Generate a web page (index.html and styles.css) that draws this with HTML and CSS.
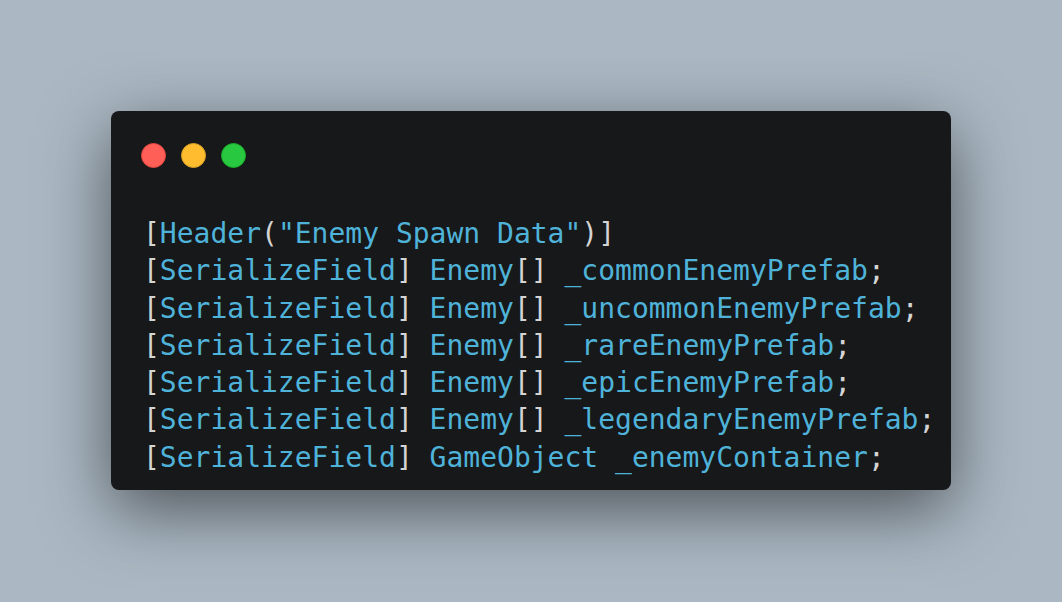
FILE: index.html
```html
<!DOCTYPE html>
<html>
<head>
<meta charset="utf-8">
<link rel="stylesheet" href="styles.css">
</head>
<body>
<div class="stage">
  <div class="window">
    <div class="controls">
      <span class="dot red"></span>
      <span class="dot yellow"></span>
      <span class="dot green"></span>
    </div>
    <pre class="code"><span class="p">[</span><span class="k">Header</span><span class="p">(</span><span class="k">"Enemy Spawn Data"</span><span class="p">)]</span>
<span class="p">[</span><span class="k">SerializeField</span><span class="p">]</span> <span class="k">Enemy</span><span class="p">[]</span> <span class="k">_commonEnemyPrefab</span><span class="p">;</span>
<span class="p">[</span><span class="k">SerializeField</span><span class="p">]</span> <span class="k">Enemy</span><span class="p">[]</span> <span class="k">_uncommonEnemyPrefab</span><span class="p">;</span>
<span class="p">[</span><span class="k">SerializeField</span><span class="p">]</span> <span class="k">Enemy</span><span class="p">[]</span> <span class="k">_rareEnemyPrefab</span><span class="p">;</span>
<span class="p">[</span><span class="k">SerializeField</span><span class="p">]</span> <span class="k">Enemy</span><span class="p">[]</span> <span class="k">_epicEnemyPrefab</span><span class="p">;</span>
<span class="p">[</span><span class="k">SerializeField</span><span class="p">]</span> <span class="k">Enemy</span><span class="p">[]</span> <span class="k">_legendaryEnemyPrefab</span><span class="p">;</span>
<span class="p">[</span><span class="k">SerializeField</span><span class="p">]</span> <span class="k">GameObject</span> <span class="k">_enemyContainer</span><span class="p">;</span></pre>
  </div>
</div>
</body>
</html>
```
FILE: styles.css
```css
html, body {
  margin: 0;
  padding: 0;
}
body {
  background: #abb8c3;
  width: 1062px;
  height: 602px;
  overflow: hidden;
}
.stage {
  width: 1062px;
  height: 602px;
  box-sizing: border-box;
  padding-top: 111px;
  display: flex;
  align-items: flex-start;
  justify-content: center;
}
.window {
  width: 840px;
  height: 379px;
  box-sizing: border-box;
  background: #17181a;
  border-radius: 8px;
  box-shadow: 0 20px 68px rgba(0, 0, 0, 0.55);
  padding: 32px 0 0 30px;
}
.controls {
  display: flex;
  gap: 15px;
  height: 25px;
}
.dot {
  width: 25px;
  height: 25px;
  border-radius: 50%;
  box-sizing: border-box;
}
.red { background: #ff5f57; border: 1px solid #e0443e; }
.yellow { background: #febc2e; border: 1px solid #d9a125; }
.green { background: #28c840; border: 1px solid #1aab29; }
.code {
  margin: 47px 0 0 2px;
  font-family: "DejaVu Sans Mono", monospace;
  font-size: 28px;
  line-height: 37.3px;
  color: #d4d4d4;
}
.k { color: #4fb3d9; }
.p { color: #d4d4d4; }
```
